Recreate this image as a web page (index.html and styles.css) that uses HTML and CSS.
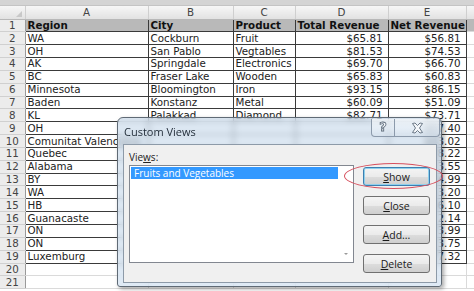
FILE: index.html
```html
<!DOCTYPE html>
<html lang="en">
<head>
    <meta charset="UTF-8">
    <title>Custom Views</title>
    <link rel="stylesheet" href="styles.css">
</head>
<body>
    <div class="topbar"></div>
    <table class="sheet">
        <colgroup>
            <col class="c-num"><col class="c-a"><col class="c-b"><col class="c-c"><col class="c-d"><col class="c-e"><col class="c-f">
        </colgroup>
        <tr class="letters">
            <th class="corner"><span class="tri"></span></th><th>A</th><th>B</th><th>C</th><th>D</th><th>E</th><th></th>
        </tr>
        <tr class="head"><th class="num">1</th><td>Region</td><td>City</td><td>Product</td><td>Total Revenue</td><td>Net Revenue</td><td class="blank"></td></tr>
        <tr><th class="num">2</th><td>WA</td><td>Cockburn</td><td>Fruit</td><td class="money">$65.81</td><td class="money">$56.81</td><td class="blank"></td></tr>
        <tr><th class="num">3</th><td>OH</td><td>San Pablo</td><td>Vegtables</td><td class="money">$81.53</td><td class="money">$74.53</td><td class="blank"></td></tr>
        <tr><th class="num">4</th><td>AK</td><td>Springdale</td><td>Electronics</td><td class="money">$69.70</td><td class="money">$66.70</td><td class="blank"></td></tr>
        <tr><th class="num">5</th><td>BC</td><td>Fraser Lake</td><td>Wooden</td><td class="money">$65.83</td><td class="money">$60.83</td><td class="blank"></td></tr>
        <tr><th class="num">6</th><td>Minnesota</td><td>Bloomington</td><td>Iron</td><td class="money">$93.15</td><td class="money">$86.15</td><td class="blank"></td></tr>
        <tr><th class="num">7</th><td>Baden</td><td>Konstanz</td><td>Metal</td><td class="money">$60.09</td><td class="money">$51.09</td><td class="blank"></td></tr>
        <tr><th class="num">8</th><td>KL</td><td>Palakkad</td><td>Diamond</td><td class="money">$82.71</td><td class="money">$73.71</td><td class="blank"></td></tr>
        <tr><th class="num">9</th><td>OH</td><td></td><td></td><td></td><td class="money">$57.40</td><td class="blank"></td></tr>
        <tr><th class="num">10</th><td class="cut">Comunitat Valenciana</td><td></td><td></td><td></td><td class="money">$43.02</td><td class="blank"></td></tr>
        <tr><th class="num">11</th><td>Quebec</td><td></td><td></td><td></td><td class="money">$68.22</td><td class="blank"></td></tr>
        <tr><th class="num">12</th><td>Alabama</td><td></td><td></td><td></td><td class="money">$53.55</td><td class="blank"></td></tr>
        <tr><th class="num">13</th><td>BY</td><td></td><td></td><td></td><td class="money">$84.99</td><td class="blank"></td></tr>
        <tr><th class="num">14</th><td>WA</td><td></td><td></td><td></td><td class="money">$63.20</td><td class="blank"></td></tr>
        <tr><th class="num">15</th><td>HB</td><td></td><td></td><td></td><td class="money">$46.10</td><td class="blank"></td></tr>
        <tr><th class="num">16</th><td>Guanacaste</td><td></td><td></td><td></td><td class="money">$72.14</td><td class="blank"></td></tr>
        <tr><th class="num">17</th><td>ON</td><td></td><td></td><td></td><td class="money">$63.99</td><td class="blank"></td></tr>
        <tr><th class="num">18</th><td>ON</td><td></td><td></td><td></td><td class="money">$53.75</td><td class="blank"></td></tr>
        <tr><th class="num">19</th><td>Luxemburg</td><td></td><td></td><td></td><td class="money">$77.32</td><td class="blank"></td></tr>
        <tr class="empty"><th class="num">20</th><td></td><td></td><td></td><td></td><td></td><td></td></tr>
        <tr class="empty"><th class="num">21</th><td></td><td></td><td></td><td></td><td></td><td></td></tr>
    </table>

    <div class="dialog">
        <div class="titlebar">
            <span class="title">Custom Views</span>
            <div class="caption-btns">
                <span class="cap-help">?</span>
                <span class="cap-close">
                    <svg width="13" height="12" viewBox="0 0 13 12">
                        <path d="M1.5 1.5 L4 1 L6.5 3.5 L9 1 L11.5 1.5 L8.5 6 L11.5 10.5 L9 11 L6.5 8.5 L4 11 L1.5 10.5 L4.5 6 Z" fill="#f4f7fa" stroke="#5d6b7a" stroke-width="0.9" stroke-linejoin="round"/>
                    </svg>
                </span>
            </div>
        </div>
        <div class="client">
            <div class="left">
                <div class="label">Vie<u>w</u>s:</div>
                <div class="listbox">
                    <div class="items">
                        <div class="item selected">Fruits and Vegetables</div>
                    </div>
                    <div class="scroll"><span class="arrow"></span></div>
                </div>
            </div>
            <div class="buttons">
                <button class="btn default"><u>S</u>how</button>
                <button class="btn"><u>C</u>lose</button>
                <button class="btn"><u>A</u>dd...</button>
                <button class="btn"><u>D</u>elete</button>
            </div>
        </div>
    </div>
    <div class="highlight"></div>
</body>
</html>
```

FILE: styles.css
```css
body {
    margin: 0;
    width: 474px;
    height: 291px;
    overflow: hidden;
    background: #ffffff;
    font-family: "DejaVu Sans", Verdana, sans-serif;
    position: relative;
}
.topbar {
    height: 6px;
    background: #d4d4d4;
    border-bottom: 1px solid #c4c4c4;
    box-sizing: border-box;
}
.sheet {
    border-collapse: collapse;
    table-layout: fixed;
    width: 474px;
    font-size: 10.3px;
}
.c-num { width: 25px; }
.c-a { width: 123px; }
.c-b { width: 85px; }
.c-c { width: 62px; }
.c-d { width: 93px; }
.c-e { width: 78px; }
.c-f { width: 8px; }
.sheet tr {
    height: 12.85px;
}
.sheet td, .sheet th {
    padding: 0 0 0 2px;
    line-height: 11px;
    white-space: nowrap;
    overflow: hidden;
}
.sheet td {
    border: 1px solid #3a3a3a;
    color: #222;
}
.sheet td.cut {
    max-width: 0;
}
.letters {
    height: 13px !important;
}
.letters th {
    background: linear-gradient(#f6f6f6, #e2e2e2);
    border-right: 1px solid #cfcfcf;
    border-bottom: 1px solid #b8b8b8;
    color: #444;
    font-weight: normal;
    text-align: center;
    padding: 0;
}
.corner {
    position: relative;
}
.tri {
    position: absolute;
    right: 3px;
    bottom: 2px;
    width: 0;
    height: 0;
    border-left: 6px solid transparent;
    border-bottom: 6px solid #c8c8c8;
}
.num {
    background: #ececec;
    border-right: 1px solid #9a9a9a;
    border-bottom: 1px solid #d0d0d0;
    color: #444;
    font-weight: normal;
    text-align: center;
    padding: 0 !important;
}
.head td {
    background: #b9b9b9;
    font-weight: bold;
    color: #111;
}
.money {
    text-align: right;
    padding-right: 5px !important;
}
.sheet td.blank, .empty td {
    border: 1px solid #dadada;
}
.empty td {
    border-top: none;
}
.dialog {
    position: absolute;
    left: 117px;
    top: 117px;
    width: 325px;
    height: 170px;
    box-sizing: border-box;
    border: 1px solid #5f6a75;
    border-radius: 6px 6px 3px 3px;
    background: rgba(196, 216, 236, 0.55);
    backdrop-filter: blur(3px);
    box-shadow: 2px 2px 4px rgba(0, 0, 0, 0.35);
    padding: 0 4px 3px 5px;
    display: flex;
    flex-direction: column;
}
.titlebar {
    height: 26px;
    display: flex;
    align-items: flex-start;
    justify-content: space-between;
    flex-shrink: 0;
}
.title {
    font-family: "Open Sans", "Noto Sans", sans-serif;
    font-size: 11px;
    color: #1f2a36;
    padding-top: 6px;
    padding-left: 1px;
}
.caption-btns {
    display: flex;
    height: 17px;
    margin-top: 1px;
    margin-right: -3px;
    border: 1px solid #8c9aab;
    border-top: none;
    border-radius: 0 0 4px 4px;
    background: linear-gradient(rgba(255, 255, 255, 0.55), rgba(220, 232, 244, 0.35));
}
.cap-help {
    width: 22px;
    border-right: 1px solid #8c9aab;
    text-align: center;
    font-family: "DejaVu Sans", sans-serif;
    font-size: 13px;
    font-weight: bold;
    line-height: 16px;
    color: #f4f7fa;
    -webkit-text-stroke: 0.8px #5d6b7a;
}
.cap-close {
    width: 44px;
    display: flex;
    align-items: center;
    justify-content: center;
}
.client {
    flex: 1;
    background: #f0f0f0;
    border: 1px solid #8d9aa8;
    display: flex;
    padding: 5px 7px 0 5px;
    gap: 9px;
}
.left {
    display: flex;
    flex-direction: column;
}
.label {
    font-family: "Open Sans", "Noto Sans", sans-serif;
    font-size: 10px;
    color: #222;
    height: 15px;
    line-height: 14px;
}
.listbox {
    width: 225px;
    height: 98px;
    box-sizing: border-box;
    border: 1px solid #828790;
    background: #ffffff;
    display: flex;
    padding: 1px 0 1px 1px;
}
.items {
    flex: 1;
}
.item {
    font-family: "Open Sans", "Noto Sans", sans-serif;
    font-size: 10px;
    height: 12px;
    line-height: 12px;
    padding-left: 3px;
    color: #222;
}
.selected {
    background: #3399ff;
    color: #ffffff;
}
.scroll {
    width: 15px;
    position: relative;
}
.arrow {
    position: absolute;
    left: 6px;
    bottom: 6px;
    width: 0;
    height: 0;
    border-left: 2px solid transparent;
    border-right: 2px solid transparent;
    border-top: 2px solid #9a9a9a;
}
.buttons {
    display: flex;
    flex-direction: column;
    gap: 10px;
    padding-top: 17px;
}
.btn {
    width: 67px;
    height: 19px;
    padding: 0;
    border: 1px solid #707070;
    border-radius: 3px;
    background: linear-gradient(#f4f4f4 0%, #ebebeb 50%, #dddddd 51%, #cfcfcf 100%);
    font-family: "Open Sans", "Noto Sans", sans-serif;
    font-size: 10.5px;
    color: #1a1a1a;
}
.btn.default {
    border-color: #3c7fb1;
    box-shadow: inset 0 0 0 1px #8fd0ec;
}
.highlight {
    position: absolute;
    left: 344px;
    top: 163px;
    width: 99px;
    height: 26px;
    box-sizing: border-box;
    border: 1.5px solid #d6505e;
    border-radius: 50%;
}
```
